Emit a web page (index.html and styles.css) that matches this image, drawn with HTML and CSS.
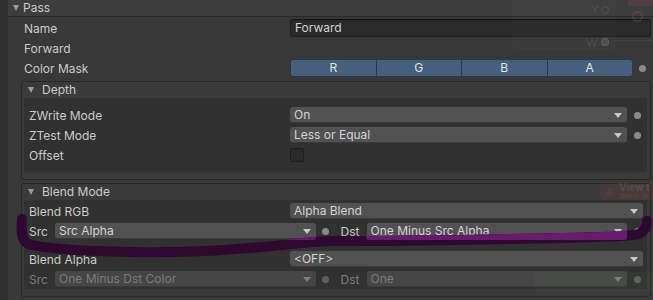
FILE: index.html
```html
<!DOCTYPE html>
<html>
<head>
    <meta charset="utf-8">
    <link rel="stylesheet" href="styles.css">
</head>
<body>
    <div class="inspector">
        <div class="pass-header"><span class="tri"></span>Pass</div>
        <div class="pass-body">
            <div class="row outer">
                <span class="label">Name</span>
                <div class="text-field">Forward</div>
            </div>
            <div class="row outer">
                <span class="label">Forward</span>
            </div>
            <div class="row outer">
                <span class="label">Color Mask</span>
                <div class="value">
                    <div class="mask">
                        <span>R</span><span>G</span><span>B</span><span>A</span>
                    </div>
                    <span class="dot-slot"><i class="dot"></i></span>
                </div>
            </div>

            <div class="box depth">
                <div class="box-header"><span class="tri"></span>Depth</div>
                <div class="box-body">
                    <div class="row">
                        <span class="label">ZWrite Mode</span>
                        <div class="value">
                            <div class="popup">On</div>
                            <span class="dot-slot"><i class="dot"></i></span>
                        </div>
                    </div>
                    <div class="row">
                        <span class="label">ZTest Mode</span>
                        <div class="value">
                            <div class="popup">Less or Equal</div>
                            <span class="dot-slot"><i class="dot"></i></span>
                        </div>
                    </div>
                    <div class="row">
                        <span class="label">Offset</span>
                        <div class="value">
                            <span class="checkbox"></span>
                        </div>
                    </div>
                </div>
            </div>

            <div class="box blend">
                <div class="box-header"><span class="tri"></span>Blend Mode</div>
                <div class="box-body">
                    <div class="row">
                        <span class="label">Blend RGB</span>
                        <div class="value">
                            <div class="popup wide">Alpha Blend</div>
                        </div>
                    </div>
                    <div class="row factors">
                        <span class="label">Src</span>
                        <div class="popup">Src Alpha</div>
                        <span class="dot-slot"><i class="dot"></i></span>
                        <span class="label dst">Dst</span>
                        <div class="popup">One Minus Src Alpha</div>
                        <span class="dot-slot"><i class="dot"></i></span>
                    </div>
                    <div class="row spaced">
                        <span class="label">Blend Alpha</span>
                        <div class="value">
                            <div class="popup wide">&lt;OFF&gt;</div>
                        </div>
                    </div>
                    <div class="row factors disabled">
                        <span class="label">Src</span>
                        <div class="popup">One Minus Dst Color</div>
                        <span class="dot-slot"><i class="dot"></i></span>
                        <span class="label dst">Dst</span>
                        <div class="popup">One</div>
                        <span class="dot-slot"><i class="dot"></i></span>
                    </div>
                </div>
            </div>
        </div>
    </div>

    <!-- graph window showing through the inspector -->
    <div class="ghost node"></div>
    <span class="ghost port-y">Y</span>
    <span class="ghost ring ring-y"></span>
    <span class="ghost port-w">W</span>
    <span class="ghost ring ring-w"></span>
    <span class="ghost wire"></span>
    <div class="ghost tag-pink"></div>
    <span class="ghost ring ring-p"></span>
    <div class="ghost view-btn">
        <span class="burger">&#8801;</span>
        <span class="view-text">View t<small>Space / W</small></span>
    </div>
    <div class="ghost tag-green"></div>

    <!-- hand-drawn annotation -->
    <svg class="scribble" width="653" height="300" viewBox="0 0 653 300">
        <defs>
            <clipPath id="over-popups">
                <rect x="55" y="224" width="261" height="16" rx="3"/>
                <rect x="366" y="224" width="261" height="16" rx="3"/>
            </clipPath>
        </defs>
        <path d="M22 219 C21 230 21 240 28 244 C45 249 85 251 132 252 C185 253 235 250 282 245 C312 242 332 240 362 241 C425 241 502 239 562 238 C602 237 628 237 639 234 C645 231 647 226 647 221"
              fill="none" stroke="#2d0830" stroke-width="10" stroke-linecap="round" stroke-linejoin="round"/>
        <path d="M22 219 C21 230 21 240 28 244 C45 249 85 251 132 252 C185 253 235 250 282 245 C312 242 332 240 362 241 C425 241 502 239 562 238 C602 237 628 237 639 234 C645 231 647 226 647 221"
              fill="none" stroke="#6a1a6e" stroke-width="10" stroke-linecap="round" stroke-linejoin="round" clip-path="url(#over-popups)"/>
    </svg>
</body>
</html>
```

FILE: styles.css
```css
body {
    margin: 0;
    width: 653px;
    height: 300px;
    overflow: hidden;
    position: relative;
    background: linear-gradient(to right, #303030 8px, #383838 8px);
    font-family: 'Inter', 'Noto Sans', sans-serif;
    font-size: 12px;
    color: #cbcbcb;
}
.pass-header {
    height: 16px;
    display: flex;
    align-items: center;
    gap: 4px;
    margin-left: 8px;
    padding-left: 5px;
    background-color: #3d3d3d;
    border-bottom: 1px solid #2a2a2a;
    line-height: 16px;
}
.tri {
    width: 0;
    height: 0;
    border-left: 3.5px solid transparent;
    border-right: 3.5px solid transparent;
    border-top: 6px solid #9a9a9a;
}
.pass-body {
    padding: 1px 2px 0 21px;
}
.row {
    height: 20px;
    display: grid;
    grid-template-columns: 266px 1fr;
    align-items: center;
}
.row.outer {
    padding-left: 3px;
}
.label {
    white-space: nowrap;
}
.value {
    display: flex;
    align-items: center;
}
.text-field {
    height: 16px;
    line-height: 16px;
    padding-left: 4px;
    background-color: #2a2a2a;
    border: 1px solid #1f1f1f;
    border-top-color: #141414;
    border-radius: 3px;
    color: #d2d2d2;
}
.mask {
    flex: 1;
    height: 16px;
    display: flex;
    background-color: #46607c;
    border: 1px solid #27384a;
    border-radius: 3px;
}
.mask span {
    flex: 1;
    text-align: center;
    line-height: 16px;
    color: #e4e4e4;
    border-left: 1px solid #27384a;
}
.mask span:first-child {
    border-left: none;
}
.dot-slot {
    width: 20px;
    height: 16px;
    display: flex;
    align-items: center;
    justify-content: center;
    flex: none;
}
.dot {
    width: 7px;
    height: 7px;
    border-radius: 50%;
    background-color: #8a8a8a;
}
.mask + .dot-slot {
    width: 18px;
}

/* foldout boxes */
.box {
    margin-top: 3px;
    background-color: #3a3a3a;
    border: 1px solid #262626;
    border-radius: 3px;
}
.box-header {
    height: 16px;
    display: flex;
    align-items: center;
    gap: 8px;
    padding-left: 6px;
    line-height: 16px;
}
.box-body {
    margin: 0 3px 7px 2px;
    padding: 7px 0 7px 5px;
    background-color: #313131;
}
.blend .box-body {
    padding: 1px 0 0 5px;
}
.box .row {
    grid-template-columns: 261px 1fr;
}
.box .row.spaced {
    margin-top: 8px;
}
.popup {
    flex: 1;
    height: 16px;
    line-height: 16px;
    padding-left: 4px;
    position: relative;
    background-color: #515151;
    border-radius: 3px;
    box-shadow: inset 0 -1px 0 #3a3a3a;
    color: #d4d4d4;
    white-space: nowrap;
    overflow: hidden;
}
.popup::after {
    content: '';
    position: absolute;
    right: 5px;
    top: 6px;
    border-left: 4px solid transparent;
    border-right: 4px solid transparent;
    border-top: 5px solid #c8c8c8;
}
.popup.wide {
    margin-right: 4px;
}
.checkbox {
    width: 12px;
    height: 12px;
    background-color: #2a2a2a;
    border: 1px solid #1e1e1e;
    border-radius: 2px;
}
.box .row.factors {
    grid-template-columns: 26px 1fr 20px 31px 1fr 20px;
}
.label.dst {
    padding-left: 5px;
}
.disabled .label,
.disabled .popup {
    color: #7b7b7b;
}
.disabled .popup {
    background-color: #464646;
}
.disabled .popup::after {
    border-top-color: #7b7b7b;
}
.disabled .dot {
    background-color: #5f5f5f;
}

/* faint graph view behind the panel */
.ghost {
    position: absolute;
    pointer-events: none;
}
.node {
    left: 513px;
    top: -6px;
    width: 100px;
    height: 54px;
    border: 1px solid rgba(255, 255, 255, 0.025);
    border-radius: 4px;
    background-color: rgba(255, 255, 255, 0.012);
}
.port-y, .port-w {
    font-size: 12px;
    color: rgba(255, 255, 255, 0.1);
}
.port-y {
    left: 591px;
    top: 2px;
}
.port-w {
    left: 586px;
    top: 35px;
}
.ring {
    width: 6px;
    height: 6px;
    border-radius: 50%;
    border: 1px solid rgba(255, 255, 255, 0.1);
}
.ring-y {
    left: 601px;
    top: 6px;
}
.ring-w {
    left: 601px;
    top: 38px;
    background-color: rgba(255, 255, 255, 0.1);
}
.ring-p {
    left: 632px;
    top: 11px;
    width: 7px;
    height: 7px;
    border: 2px solid rgba(170, 90, 200, 0.2);
}
.wire {
    left: 614px;
    top: 40px;
    width: 40px;
    height: 1px;
    background-color: rgba(255, 255, 255, 0.05);
}
.tag-pink {
    left: 628px;
    top: -10px;
    width: 30px;
    height: 16px;
    border-radius: 3px;
    background-color: rgba(200, 80, 110, 0.15);
}
.view-btn {
    left: 600px;
    top: 182px;
    width: 60px;
    height: 18px;
    display: flex;
    align-items: center;
    gap: 6px;
    padding-left: 6px;
    border-radius: 3px;
    background-color: rgba(190, 60, 70, 0.1);
    color: rgba(255, 255, 255, 0.1);
}
.burger {
    font-size: 12px;
}
.view-text {
    font-size: 10px;
    font-weight: bold;
    line-height: 9px;
    display: flex;
    flex-direction: column;
}
.view-text small {
    font-size: 6px;
    font-weight: normal;
    line-height: 7px;
}
.tag-green {
    left: 535px;
    top: 272px;
    width: 120px;
    height: 20px;
    border-radius: 3px;
    background-color: rgba(120, 200, 120, 0.04);
}
.scribble {
    position: absolute;
    left: 0;
    top: 0;
    pointer-events: none;
}
```
